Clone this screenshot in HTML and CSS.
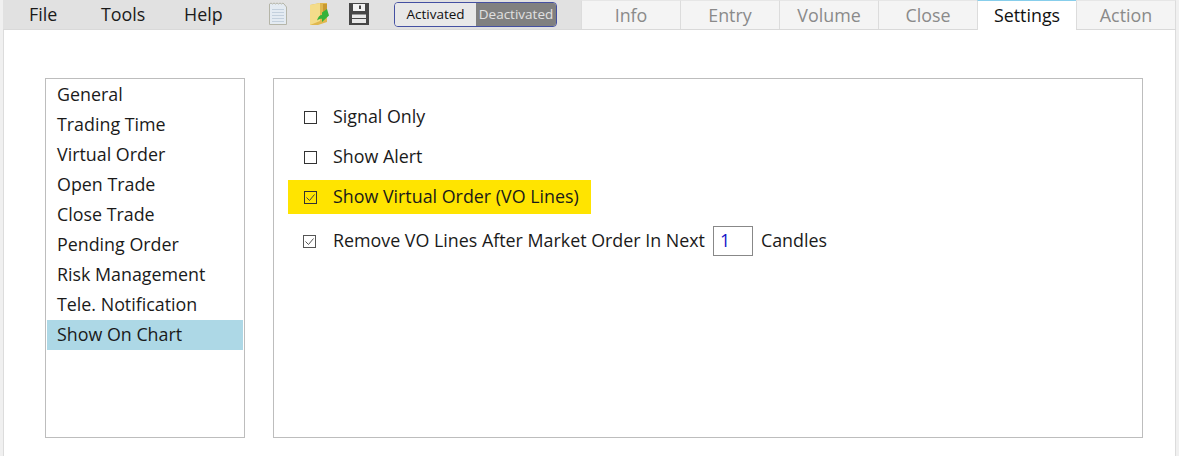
FILE: index.html
```html
<!DOCTYPE html>
<html lang="en">
<head>
    <meta charset="UTF-8">
    <meta name="viewport" content="width=device-width, initial-scale=1.0">
    <title>Settings - Show On Chart</title>
    <link rel="stylesheet" href="styles.css">
</head>
<body>
    <div class="app">
        <div class="topbar">
            <nav class="menu">
                <span class="menu__item menu__item--file">File</span>
                <span class="menu__item menu__item--tools">Tools</span>
                <span class="menu__item">Help</span>
            </nav>
            <div class="icons">
                <svg class="icon" width="20" height="24" viewBox="0 0 20 24">
                    <path d="M1.500 3 L3 2 L4.500 3 L6 2 L7.500 3 L9 2 L10.500 3 L12 2 L13.500 3 L15 2 L16 3 L18.500 6 V23.500 H1.500 Z" fill="#e4ebf2" stroke="#b5b5a8"/>
                    <path d="M4 8.500H16M4 11.500H16M4 14.500H16M4 17.500H16M4 20.500H16" stroke="#c3d0dd"/>
                </svg>
                <svg class="icon" width="20" height="24" viewBox="0 0 20 24">
                    <path d="M1 4 L11 2 H18 V21 L9 24 H1 Z" fill="#e0b84e"/>
                    <path d="M1 4 L11 2 V20 L1 24 Z" fill="#f4dc8a"/>
                    <path d="M14 3 H18 V14 H14 Z" fill="#c99a30"/>
                    <path d="M18 8 L13 11.500 V14 C10.500 14 9 16 8 19.500 C10 18 12 17.500 13 17.800 V21 L20 14.500 Z" fill="#35b23a"/>
                </svg>
                <svg class="icon" width="20" height="24" viewBox="0 0 20 24">
                    <path d="M0 2 H20 V24 H0 Z" fill="#464646"/>
                    <path d="M4 3 H16 V10 H4 Z" fill="#f2f2f2"/>
                    <path d="M10 4.500 H12 V8 H10 Z" fill="#464646"/>
                    <path d="M3 13.500 H17 V22 H3 Z" fill="#e8e8e8"/>
                    <path d="M3 17.500 H17" stroke="#464646"/>
                </svg>
            </div>
            <div class="toggle">
                <span class="toggle__part toggle__part--on">Activated</span>
                <span class="toggle__part toggle__part--off">Deactivated</span>
            </div>
            <div class="tabs">
                <span class="tab">Info</span>
                <span class="tab">Entry</span>
                <span class="tab">Volume</span>
                <span class="tab">Close</span>
                <span class="tab tab--active">Settings</span>
                <span class="tab">Action</span>
            </div>
        </div>

        <div class="content">
            <ul class="sidebar">
                <li class="sidebar__item">General</li>
                <li class="sidebar__item">Trading Time</li>
                <li class="sidebar__item">Virtual Order</li>
                <li class="sidebar__item">Open Trade</li>
                <li class="sidebar__item">Close Trade</li>
                <li class="sidebar__item">Pending Order</li>
                <li class="sidebar__item">Risk Management</li>
                <li class="sidebar__item">Tele. Notification</li>
                <li class="sidebar__item sidebar__item--active">Show On Chart</li>
            </ul>
            <div class="panel">
                <div class="option">
                    <span class="check"></span>
                    <span>Signal Only</span>
                </div>
                <div class="option">
                    <span class="check"></span>
                    <span>Show Alert</span>
                </div>
                <div class="option option--marked">
                    <span class="check">
                        <svg width="11" height="11" viewBox="0 0 11 11"><path d="M1.500 5.500 L4.500 8.500 L9.500 2.500" fill="none" stroke="#444" stroke-width="1"/></svg>
                    </span>
                    <span>Show Virtual Order (VO Lines)</span>
                </div>
                <div class="option option--last">
                    <span class="check">
                        <svg width="11" height="11" viewBox="0 0 11 11"><path d="M1.500 5.500 L4.500 8.500 L9.500 2.500" fill="none" stroke="#555" stroke-width="1"/></svg>
                    </span>
                    <span>Remove VO Lines After Market Order In Next</span>
                    <span class="number">1</span>
                    <span>Candles</span>
                </div>
            </div>
        </div>
    </div>
</body>
</html>
```

FILE: styles.css
```css
* {
    box-sizing: border-box;
}

html, body {
    margin: 0;
    padding: 0;
    background: #fff;
}

body {
    font-family: "Open Sans", "Noto Sans", sans-serif;
    font-size: 17.85px;
    color: #1a1a1a;
    overflow: hidden;
}

.app {
    width: 1179px;
    height: 456px;
    padding: 0 3px;
    background: #f0f0f0;
}

.topbar {
    display: flex;
    align-items: flex-start;
    height: 30px;
    background: #e1e1e1;
    border-bottom: 1px solid #d9d9d9;
}

.menu {
    display: flex;
    width: 265px;
    height: 29px;
    padding: 0 0 2px 26px;
    align-items: center;
}

.menu__item--file { width: 72px; }
.menu__item--tools { width: 83px; }

.icons {
    display: flex;
    gap: 21px;
    width: 126px;
    padding-top: 1px;
}

.icons .icon:nth-child(3) {
    margin-left: -1px;
}

.icon {
    display: block;
}

.toggle {
    display: flex;
    width: 163px;
    height: 25px;
    margin-top: 2px;
    border: 1.5px solid #4450a2;
    border-radius: 4px;
    font-size: 13.5px;
    overflow: hidden;
}

.toggle__part {
    display: flex;
    align-items: center;
    justify-content: center;
    padding-bottom: 1px;
}

.toggle__part--on {
    width: 81px;
    background: #e8e8e8;
    color: #111;
}

.toggle__part--off {
    flex: 1;
    background: #808080;
    color: #e0e0e0;
}

.tabs {
    display: flex;
    margin-left: 24px;
}

.tab {
    display: flex;
    align-items: center;
    justify-content: center;
    width: 99px;
    height: 29px;
    padding-bottom: 1px;
    background: #f4f4f4;
    border-left: 1px solid #dcdcdc;
    border-top: 1px solid #e6e6e6;
    color: #8a8a8a;
}

.tab:last-child {
    border-right: 1px solid #dcdcdc;
    width: 100px;
}

.tab--active {
    height: 30px;
    padding-bottom: 2px;
    background: #fff;
    border-top: 1px solid #87ceeb;
    color: #111;
}

.content {
    display: flex;
    gap: 28px;
    height: 426px;
    padding: 48px 0 0 41px;
    background: #fff;
    border-left: 1px solid #dcdcdc;
    border-right: 1px solid #dcdcdc;
}

.sidebar {
    width: 200px;
    height: 360px;
    margin: 0;
    padding: 1px;
    list-style: none;
    border: 1px solid #bdbdbd;
}

.sidebar__item {
    display: flex;
    align-items: center;
    height: 30px;
    padding: 0 0 2px 10px;
}

.sidebar__item--active {
    background: #add8e6;
}

.panel {
    display: flex;
    flex-direction: column;
    align-items: flex-start;
    gap: 6px;
    width: 870px;
    height: 360px;
    padding: 21px 0 0 14px;
    border: 1px solid #bdbdbd;
}

.option {
    display: flex;
    align-items: center;
    height: 34px;
    padding: 0 12px 2px 16px;
}

.option--marked {
    background: #ffe400;
}

.option--last {
    margin-top: 4px;
    padding-left: 15px;
}

.check {
    display: flex;
    align-items: center;
    justify-content: center;
    width: 13px;
    height: 13px;
    margin: 2px 16px 0 0;
    border: 1px solid #333;
}

.option--last .check {
    margin-right: 17px;
    border-color: #555;
}

.number {
    width: 40px;
    height: 30px;
    margin: 2px 8px 0 8px;
    padding-left: 6px;
    line-height: 26px;
    border: 1px solid #888;
    color: #1414c8;
}
```
